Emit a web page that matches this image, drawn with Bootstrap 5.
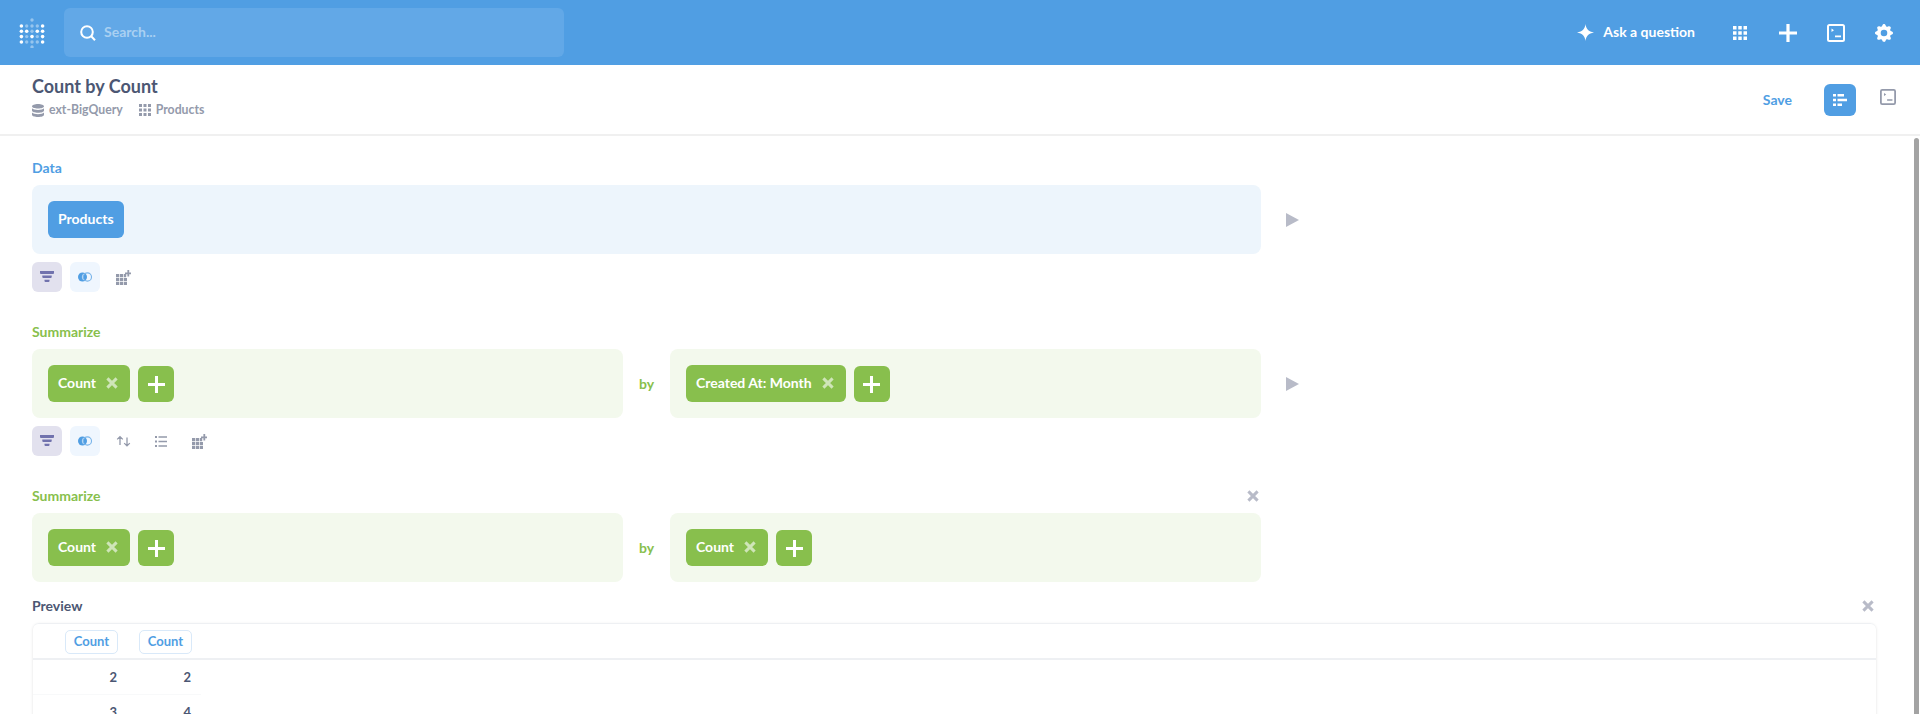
<!DOCTYPE html>
<html lang="en">
<head>
<meta charset="utf-8">
<title>Count by Count</title>
<link href="https://cdn.jsdelivr.net/npm/bootstrap@5.3.0/dist/css/bootstrap.min.css" rel="stylesheet">
<style>
html,body{height:714px;overflow:hidden}
body{font-family:"Lato","Liberation Sans",sans-serif;color:#4c5773;background:#fff;position:relative}
svg{display:block;flex:none}
.topbar{height:65px;background:#509ee3;color:#fff;padding:0 !important}
.logo-cell{width:64px}
.searchbox{width:500px;height:49px;background:#62a8e7;border-radius:6px;padding-left:16px;gap:8px;color:#a9d0f2;font-size:14px;font-weight:700}
.nudge-up{padding-bottom:2px}
.ask{font-size:14px;font-weight:700;gap:9px;margin-right:38px}
.top-icons{gap:30px;margin-right:27px}
.grid-ico{margin-right:2px}
.qbar{height:71px;border-bottom:2px solid #f0f0f0;padding:0 24px 6px 32px}
.qtitle{font-size:18px;font-weight:700;line-height:22px;margin:0 0 5px}
.crumbs{font-size:12.25px;font-weight:700;color:#949aab;line-height:16px;gap:16px}
.crumb{gap:5px}
.right-tools{padding-top:7px}
.save-link{font-size:14px;font-weight:700;color:#509ee3;margin:0 32px 2px 0;padding:0;border:0;background:none}
.view-btn{width:32px;height:32px;border-radius:6px;background:#509ee3;margin-right:24px}
.nbook{padding:24px 0 0 32px}
.nb-label{width:1229px;height:16px;line-height:16px;font-size:14px;font-weight:700;margin-bottom:9px}
.l-blue{color:#509ee3}.l-green{color:#88bf4d}.l-dark{color:#4c5773}
.nb-row{width:1229px;gap:0}
.nb-box{height:69px;border-radius:8px;padding:16px;gap:8px;flex:1 1 0}
.b-blue{background:#edf5fc}.b-green{background:#f3f9ed}
.by-word{width:47px;text-align:center;color:#88bf4d;font-size:14px;font-weight:700}
.pill-x{height:37px;border-radius:6px;color:#fff;font-size:14px;font-weight:700;padding:0 12px 2px 10px;gap:10px;white-space:nowrap}
.p-blue{background:#509ee3;padding-right:10px}.p-green{background:#88bf4d}
.plus-x{width:36px;height:36px;border-radius:6px;background:#88bf4d;margin-top:1px}
.run-tri{margin-left:25px}
.tools{height:30px;margin-top:8px;margin-bottom:32px;gap:8px}
.tool{width:30px;height:30px;border-radius:6px}
.t-purple{background:#e2e1ee}.t-blue{background:#eff6fe}
.prev-head{width:1844px;height:16px;line-height:16px;font-size:14px;font-weight:700;margin:16px 0 9px}
.prev-card{width:1843px;margin-left:1px;height:300px;border-top:1px solid #eef0f3;border-radius:6px 6px 0 0;box-shadow:0 1px 3px rgba(0,0,0,.13)}
.hd-row{height:36px;border-bottom:2px solid #eef0f3;padding:1px 0 0 32px;gap:21px;align-items:center}
.col-pill{width:53px;height:24px;line-height:21px;border:1px solid #d9e9f9;border-radius:5px;color:#509ee3;font-size:13px;font-weight:700;text-align:center}
.data-row{height:35px;width:168px;border-bottom:1px solid #f8f9fa;font-size:13px;font-weight:700;line-height:35px}
.cell-num{width:74px;text-align:right;flex:none}
.cell-first{width:84px}
.thumb{position:absolute;right:1px;top:138px;bottom:0;width:5px;background:#a3a3a3;border-radius:3px 3px 0 0}
</style>
</head>
<body>
<svg width="0" height="0" style="position:absolute">
<defs>
<symbol id="i-grid" viewBox="0 0 16 16"><path fill="currentColor" d="M0 0h4v4H0zM6 0h4v4H6zM12 0h4v4h-4zM0 6h4v4H0zM6 6h4v4H6zM12 6h4v4h-4zM0 12h4v4H0zM6 12h4v4H6zM12 12h4v4h-4z"/></symbol>
<symbol id="i-term" viewBox="0 0 18 18"><rect x="1" y="1" width="16" height="16" rx="1.5" fill="none" stroke="currentColor" stroke-width="2"/><path fill="currentColor" d="M4.500 4.500 7 6.200 4.500 8zM8 11.500h6v1.800H8z"/></symbol>
<symbol id="i-x" viewBox="0 0 12 12"><path d="M1.400 1.400l9.200 9.200M10.600 1.400l-9.200 9.200" stroke="currentColor" stroke-width="3" fill="none"/></symbol>
<symbol id="i-plus" viewBox="0 0 18 18"><path fill="currentColor" d="M7.400 0h3.200v7.400H18v3.200h-7.400V18H7.400v-7.400H0V7.400h7.400z"/></symbol>
<symbol id="i-filter" viewBox="0 0 14 12"><path fill="#7172ad" d="M0 0h14v1.900a1 1 0 0 1-1 1H1a1 1 0 0 1-1-1zM2.300 4.500h9.400v1.400a1 1 0 0 1-1 1H3.300a1 1 0 0 1-1-1zM4.500 8.800h5V10a1 1 0 0 1-1 1h-3a1 1 0 0 1-1-1z"/></symbol>
<symbol id="i-join" viewBox="0 0 14 10"><circle cx="4.500" cy="5" r="4.500" fill="#509ee3"/><circle cx="9.400" cy="5" r="4.100" fill="none" stroke="#7ab5ea" stroke-width="1.100"/><path d="M5.700 1.800a4.400 4.400 0 0 0 0 6.400" fill="none" stroke="#d7e9f9" stroke-width=".8"/></symbol>
<symbol id="i-add" viewBox="0 0 15 15"><path fill="#949aab" d="M0 4h3.200v3.200H0zM3.900 4h3.200v3.200H3.900zM7.800 4h2.400v3.200H7.800zM0 7.900h3.200v3.200H0zM3.900 7.900h3.200v3.200H3.900zM7.800 7.900h3.200v3.200H7.800zM0 11.800h3.200V15H0zM3.900 11.800h3.200V15H3.900zM7.800 11.800h3.200V15H7.800zM11.400 0h1.800v2.400H15.600v1.800h-2.400v2.400h-1.800V4.200H9V2.400h2.400z"/></symbol>
<symbol id="i-sort" viewBox="0 0 15 12"><path d="M4 10V1.800M1.200 4.400 4 1.600l2.800 2.800M11 2.500v8.200M8.200 8.100 11 10.900l2.800-2.800" fill="none" stroke="#949aab" stroke-width="1.300"/></symbol>
<symbol id="i-list" viewBox="0 0 12 11"><path fill="#949aab" d="M0 0h2v2H0zM3.500.300H12v1.400H3.500zM0 4.500h2v2H0zM3.500 4.800H12v1.400H3.500zM0 9h2v2H0zM3.500 9.300H12v1.400H3.500z"/></symbol>
<symbol id="i-tri" viewBox="0 0 13 14"><path fill="#b8bbc8" d="M0 0l13 7-13 7z"/></symbol>
</defs>
</svg>

<nav class="navbar topbar flex-nowrap">
  <div class="d-flex align-items-center">
    <div class="logo-cell d-flex justify-content-center">
      <svg width="26" height="30" viewBox="0 0 26 30" fill="#fff">
        <g opacity=".4"><circle cx="13" cy="2" r="1.700"/><circle cx="7.700" cy="8" r="1.700"/><circle cx="13" cy="8" r="1.700"/><circle cx="18.300" cy="8" r="1.700"/><circle cx="13" cy="13.300" r="1.700"/><circle cx="7.700" cy="18.600" r="1.700"/><circle cx="18.300" cy="18.600" r="1.700"/><circle cx="7.700" cy="24" r="1.700"/><circle cx="13" cy="24" r="1.700"/><circle cx="18.300" cy="24" r="1.700"/><circle cx="13" cy="29" r="1.700"/></g>
        <circle cx="2.400" cy="8" r="1.800"/><circle cx="23.600" cy="8" r="1.800"/><circle cx="2.400" cy="13.300" r="1.800"/><circle cx="7.700" cy="13.300" r="1.800"/><circle cx="18.300" cy="13.300" r="1.800"/><circle cx="23.600" cy="13.300" r="1.800"/><circle cx="2.400" cy="18.600" r="1.800"/><circle cx="13" cy="18.600" r="1.800"/><circle cx="23.600" cy="18.600" r="1.800"/><circle cx="2.400" cy="24" r="1.800"/><circle cx="23.600" cy="24" r="1.800"/>
      </svg>
    </div>
    <div class="searchbox d-flex align-items-center">
      <svg width="16" height="16" viewBox="0 0 16 16" fill="none" stroke="#fff" stroke-width="2"><circle cx="7" cy="7" r="5.800"/><path d="M11 11l4 4.200"/></svg>
      <span class="nudge-up">Search...</span>
    </div>
  </div>
  <div class="d-flex align-items-center">
    <div class="ask d-flex align-items-center">
      <svg width="17" height="17" viewBox="0 0 17 17"><path fill="#fff" d="M8.500 0c.6 5 2.900 7.400 8.500 8.500-5.600 1.100-7.900 3.500-8.500 8.500-.6-5-2.900-7.400-8.500-8.500C5.600 7.400 7.900 5 8.500 0z"/></svg>
      <span class="nudge-up">Ask a question</span>
    </div>
    <div class="top-icons d-flex align-items-center">
      <svg width="14" height="14" class="text-white grid-ico"><use href="#i-grid"/></svg>
      <svg width="18" height="18" class="text-white"><use href="#i-plus"/></svg>
      <svg width="18" height="18" class="text-white"><use href="#i-term"/></svg>
      <svg width="18" height="18" viewBox="0 0 16 16"><path fill="#fff" fill-rule="evenodd" d="M9.405 1.050c-.413-1.400-2.397-1.400-2.810 0l-.100.340a1.464 1.464 0 0 1-2.105.872l-.310-.170c-1.283-.698-2.686.705-1.987 1.987l.169.311c.446.820.023 1.841-.872 2.105l-.340.100c-1.400.413-1.400 2.397 0 2.810l.340.100a1.464 1.464 0 0 1 .872 2.105l-.170.310c-.698 1.283.705 2.686 1.987 1.987l.311-.169a1.464 1.464 0 0 1 2.105.872l.100.340c.413 1.400 2.397 1.400 2.810 0l.100-.340a1.464 1.464 0 0 1 2.105-.872l.310.170c1.283.698 2.686-.705 1.987-1.987l-.169-.311a1.464 1.464 0 0 1 .872-2.105l.340-.100c1.400-.413 1.400-2.397 0-2.810l-.340-.100a1.464 1.464 0 0 1-.872-2.105l.170-.310c.698-1.283-.705-2.686-1.987-1.987l-.311.169a1.464 1.464 0 0 1-2.105-.872l-.100-.340zM8 10.930a2.929 2.929 0 1 1 0-5.860 2.929 2.929 0 0 1 0 5.860z"/></svg>
    </div>
  </div>
</nav>

<div class="qbar d-flex align-items-center justify-content-between">
  <div>
    <h1 class="qtitle">Count by Count</h1>
    <div class="crumbs d-flex">
      <span class="crumb d-flex align-items-center"><svg width="12" height="13" viewBox="0 0 12 13"><path fill="#949aab" d="M0 2.300C0 1 2.700 0 6 0s6 1 6 2.300S9.300 4.600 6 4.600 0 3.600 0 2.300zM0 4.300c1 1.200 3.400 1.700 6 1.700s5-.5 6-1.700v2.200C12 7.800 9.300 8.800 6 8.800S0 7.800 0 6.500zM0 8.500c1 1.200 3.400 1.700 6 1.700s5-.5 6-1.700v2.200C12 12 9.300 13 6 13S0 12 0 10.700z"/></svg>ext-BigQuery</span>
      <span class="crumb d-flex align-items-center"><svg width="12" height="12" style="color:#949aab"><use href="#i-grid"/></svg>Products</span>
    </div>
  </div>
  <div class="right-tools d-flex align-items-center">
    <button class="save-link" type="button">Save</button>
    <div class="view-btn d-flex align-items-center justify-content-center">
      <svg width="14" height="12" viewBox="0 0 14 12"><path fill="#fff" d="M0 0h3v2.500H0zM4.500 0H11v2.500H4.500zM0 4.700h3v2.500H0zM4.500 4.700H14v2.500H4.500zM0 9.500h3V12H0zM4.500 9.500H9V12H4.500z"/></svg>
    </div>
    <svg width="16" height="16" style="color:#949aab;margin-bottom:6px"><use href="#i-term"/></svg>
  </div>
</div>

<main class="nbook">
  <div class="nb-label l-blue">Data</div>
  <div class="d-flex align-items-center">
    <div class="nb-row d-flex">
      <div class="nb-box b-blue d-flex"><span class="pill-x p-blue d-flex align-items-center">Products</span></div>
    </div>
    <svg class="run-tri" width="13" height="14"><use href="#i-tri"/></svg>
  </div>
  <div class="tools d-flex align-items-center">
    <div class="tool t-purple d-flex align-items-center justify-content-center"><svg width="14" height="12"><use href="#i-filter"/></svg></div>
    <div class="tool t-blue d-flex align-items-center justify-content-center"><svg width="14" height="10"><use href="#i-join"/></svg></div>
    <div class="tool d-flex align-items-center justify-content-center"><svg width="15" height="15"><use href="#i-add"/></svg></div>
  </div>

  <div class="nb-label l-green">Summarize</div>
  <div class="d-flex align-items-center">
    <div class="nb-row d-flex align-items-center">
      <div class="nb-box b-green d-flex">
        <span class="pill-x p-green d-flex align-items-center">Count<svg width="12" height="12" style="color:#cfe5b8"><use href="#i-x"/></svg></span>
        <span class="plus-x d-flex align-items-center justify-content-center"><svg width="17" height="17" class="text-white"><use href="#i-plus"/></svg></span>
      </div>
      <div class="by-word">by</div>
      <div class="nb-box b-green d-flex">
        <span class="pill-x p-green d-flex align-items-center">Created At: Month<svg width="12" height="12" style="color:#cfe5b8"><use href="#i-x"/></svg></span>
        <span class="plus-x d-flex align-items-center justify-content-center"><svg width="17" height="17" class="text-white"><use href="#i-plus"/></svg></span>
      </div>
    </div>
    <svg class="run-tri" width="13" height="14"><use href="#i-tri"/></svg>
  </div>
  <div class="tools d-flex align-items-center">
    <div class="tool t-purple d-flex align-items-center justify-content-center"><svg width="14" height="12"><use href="#i-filter"/></svg></div>
    <div class="tool t-blue d-flex align-items-center justify-content-center"><svg width="14" height="10"><use href="#i-join"/></svg></div>
    <div class="tool d-flex align-items-center justify-content-center"><svg width="15" height="12"><use href="#i-sort"/></svg></div>
    <div class="tool d-flex align-items-center justify-content-center"><svg width="12" height="11"><use href="#i-list"/></svg></div>
    <div class="tool d-flex align-items-center justify-content-center"><svg width="15" height="15"><use href="#i-add"/></svg></div>
  </div>

  <div class="nb-label l-green d-flex align-items-center justify-content-between">
    <span>Summarize</span>
    <svg width="12" height="12" style="color:#b8bbc8;margin-right:2px"><use href="#i-x"/></svg>
  </div>
  <div class="nb-row d-flex align-items-center">
    <div class="nb-box b-green d-flex">
      <span class="pill-x p-green d-flex align-items-center">Count<svg width="12" height="12" style="color:#cfe5b8"><use href="#i-x"/></svg></span>
      <span class="plus-x d-flex align-items-center justify-content-center"><svg width="17" height="17" class="text-white"><use href="#i-plus"/></svg></span>
    </div>
    <div class="by-word">by</div>
    <div class="nb-box b-green d-flex">
      <span class="pill-x p-green d-flex align-items-center">Count<svg width="12" height="12" style="color:#cfe5b8"><use href="#i-x"/></svg></span>
      <span class="plus-x d-flex align-items-center justify-content-center"><svg width="17" height="17" class="text-white"><use href="#i-plus"/></svg></span>
    </div>
  </div>

  <div class="prev-head l-dark d-flex align-items-center justify-content-between">
    <span>Preview</span>
    <svg width="12" height="12" style="color:#b8bbc8;margin-right:2px"><use href="#i-x"/></svg>
  </div>
  <div class="prev-card">
    <div class="hd-row d-flex">
      <div class="col-pill">Count</div>
      <div class="col-pill">Count</div>
    </div>
    <div class="data-row d-flex"><div class="cell-num cell-first">2</div><div class="cell-num">2</div></div>
    <div class="data-row d-flex"><div class="cell-num cell-first">3</div><div class="cell-num">4</div></div>
  </div>
</main>
<div class="thumb"></div>
<script src="https://cdn.jsdelivr.net/npm/bootstrap@5.3.0/dist/js/bootstrap.bundle.min.js"></script>
</body>
</html>
